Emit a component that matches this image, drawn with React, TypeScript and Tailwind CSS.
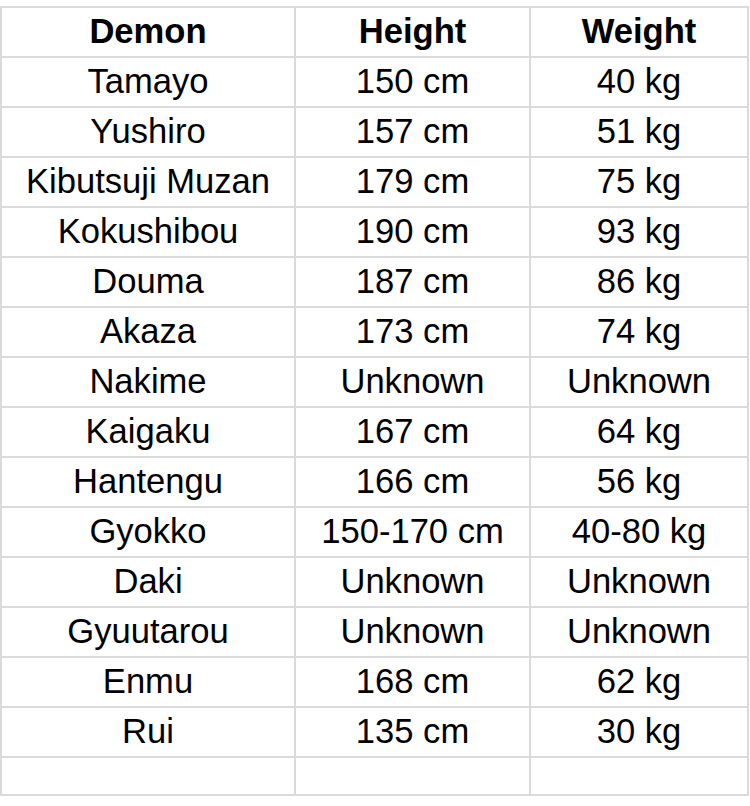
const rows: [string, string, string][] = [
  ["Tamayo", "150 cm", "40 kg"],
  ["Yushiro", "157 cm", "51 kg"],
  ["Kibutsuji Muzan", "179 cm", "75 kg"],
  ["Kokushibou", "190 cm", "93 kg"],
  ["Douma", "187 cm", "86 kg"],
  ["Akaza", "173 cm", "74 kg"],
  ["Nakime", "Unknown", "Unknown"],
  ["Kaigaku", "167 cm", "64 kg"],
  ["Hantengu", "166 cm", "56 kg"],
  ["Gyokko", "150-170 cm", "40-80 kg"],
  ["Daki", "Unknown", "Unknown"],
  ["Gyuutarou", "Unknown", "Unknown"],
  ["Enmu", "168 cm", "62 kg"],
  ["Rui", "135 cm", "30 kg"],
];

const cell =
  "flex items-center justify-center border-r-2 border-b-2 border-[#dadada] whitespace-nowrap";

export default function App() {
  return (
    <div className="w-[750px] h-[806px] bg-white pt-[6px] [font-family:'Liberation_Sans',Arial,sans-serif] text-[34.6px] text-black">
      <div className="w-[749px] border-l-2 border-t-2 border-[#dadada] grid grid-cols-[294px_235px_218px]">
        {/* cabeçalho */}
        <div className={`${cell} h-[50px] font-bold`}>Demon</div>
        <div className={`${cell} h-[50px] font-bold`}>Height</div>
        <div className={`${cell} h-[50px] font-bold`}>Weight</div>

        {rows.map(([name, height, weight]) => (
          <div key={name} className="contents">
            <div className={`${cell} h-[50px]`}>{name}</div>
            <div className={`${cell} h-[50px]`}>{height}</div>
            <div className={`${cell} h-[50px]`}>{weight}</div>
          </div>
        ))}

        {/* linha vazia no final */}
        <div className={`${cell} h-[38px]`} />
        <div className={`${cell} h-[38px]`} />
        <div className={`${cell} h-[38px]`} />
      </div>
    </div>
  );
}
